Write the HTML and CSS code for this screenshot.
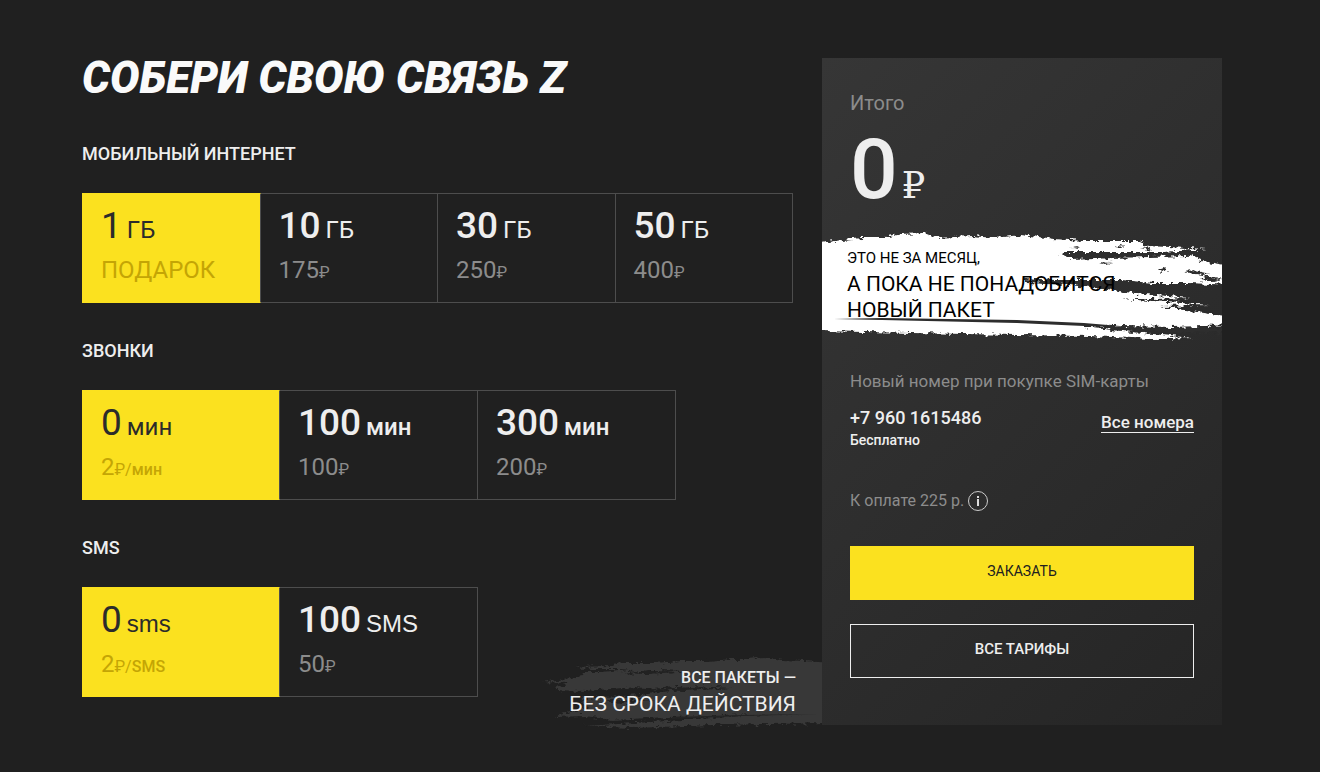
FILE: index.html
```html
<!DOCTYPE html>
<html lang="ru">
  <head>
    <meta charset="UTF-8" />
    <meta name="viewport" content="width=device-width, initial-scale=1.0" />
    <title>Собери свою связь Z</title>
    <link rel="stylesheet" href="styles.css">
  </head>
  <body>
    <main class="constructor">
      <form class="packages" id="packages">
        <h1>Собери свою связь Z</h1>

        <fieldset class="group">
          <legend>Мобильный интернет</legend>
          <div class="options options_wide">
            <label class="option">
              <input type="radio" name="internet" checked />
              <span class="amount">1<small>ГБ</small></span>
              <span class="price">ПОДАРОК</span>
            </label>
            <label class="option">
              <input type="radio" name="internet" />
              <span class="amount">10<small>ГБ</small></span>
              <span class="price">175<small>₽</small></span>
            </label>
            <label class="option">
              <input type="radio" name="internet" />
              <span class="amount">30<small>ГБ</small></span>
              <span class="price">250<small>₽</small></span>
            </label>
            <label class="option">
              <input type="radio" name="internet" />
              <span class="amount">50<small>ГБ</small></span>
              <span class="price">400<small>₽</small></span>
            </label>
          </div>
        </fieldset>

        <fieldset class="group">
          <legend>Звонки</legend>
          <div class="options">
            <label class="option">
              <input type="radio" name="calls" checked />
              <span class="amount">0<small>мин</small></span>
              <span class="price">2<small>₽/<b>мин</b></small></span>
            </label>
            <label class="option">
              <input type="radio" name="calls" />
              <span class="amount">100<small class="unit_bold">мин</small></span>
              <span class="price">100<small>₽</small></span>
            </label>
            <label class="option">
              <input type="radio" name="calls" />
              <span class="amount">300<small class="unit_bold">мин</small></span>
              <span class="price">200<small>₽</small></span>
            </label>
          </div>
        </fieldset>

        <fieldset class="group">
          <legend>SMS</legend>
          <div class="last_row">
            <div class="options">
              <label class="option">
                <input type="radio" name="sms" checked />
                <span class="amount">0<small class="sms">sms</small></span>
                <span class="price">2<small>₽/<b>SMS</b></small></span>
              </label>
              <label class="option">
                <input type="radio" name="sms" />
                <span class="amount">100<small class="sms">SMS</small></span>
                <span class="price">50<small>₽</small></span>
              </label>
            </div>
            <p class="note">
              <svg class="brush" viewBox="0 0 280 74" preserveAspectRatio="none" aria-hidden="true">
                <g fill="#383838" filter="url(#rough)">
                  <path d="M290 7 L262 5 L240 4 L222 1 L205 3 L190 3 L165 5 L140 5 L110 7 L80 7 L70 10 L34 11 L50 13 L88 13 L60 16 L40 16 L42 20 L22 23 L-3 26 L28 27 L10 34 L44 35 L95 31 L128 35 L100 39 L60 41 L38 44 L46 52 L30 55 L12 61 L42 60 L70 64 L125 61 L280 58 L290 58 Z" />
                  <path d="M290 57 L200 60 L110 66 L42 70 L90 72 L170 69 L290 67 Z" />
                </g>
                <g fill="#202020" filter="url(#rough)">
                  <path d="M78 17 L110 14 L150 15 L105 18 Z" />
                  <path d="M108 33 L150 30 L190 32 L142 35 Z" />
                  <path d="M55 45 L90 43 L115 44 L80 47 Z" />
                </g>
                <path d="M130 61 L200 59 L276 58 L200 60 L130 63 Z" fill="#242424" />
              </svg>
              <span class="line_small">Все пакеты —</span>
              <span class="line_big">Без срока действия</span>
            </p>
          </div>
        </fieldset>
      </form>

      <aside class="total">
        <h2>Итого</h2>
        <output class="sum" form="packages">0<small>₽</small></output>

        <p class="banner">
          <svg class="brush" viewBox="0 0 400 112" preserveAspectRatio="none" aria-hidden="true">
            <defs>
              <filter id="rough" x="-5%" y="-10%" width="110%" height="120%">
                <feTurbulence type="fractalNoise" baseFrequency="0.16 0.3" numOctaves="3" seed="8" />
                <feDisplacementMap in="SourceGraphic" scale="8" xChannelSelector="R" yChannelSelector="G" />
              </filter>
            </defs>
            <g fill="#fff" filter="url(#rough)">
              <!-- main stroke -->
              <path d="M-10 14 L12 11 L40 8 L62 8 L80 4 L102 3 L115 8 L150 6 L172 8 L200 5 L232 9 L262 11 L316 11 L326 16 L386 19 L340 22 L300 22 L238 24 L252 29 L290 27 L366 25 L380 31 L410 36 L410 55 L368 53 L330 53 L300 50 L232 50 L202 48 L204 53 L245 55 L280 58 L302 62 L368 68 L330 69 L300 69 L388 75 L338 76 L362 80 L410 87 L410 95 L350 97 L300 96 L262 96 L262 97 L300 101 L370 108 L330 109 L270 106 L195 105 L90 103 L-10 101 Z" />
            </g>
            <!-- gap above the lower stroke -->
            <path d="M12 89 L60 88 L195 90 L262 93 L310 97 L262 96 L195 93 L60 90 Z" fill="#2d2d2d" />
            <g fill="#2d2d2d" filter="url(#rough)">
              <path d="M250 17 L255 16 L256 18 Z M292 17 L298 15 L301 18 Z M336 39 L342 37 L345 40 L339 42 Z M362 42 L380 45 L388 44 L370 40 Z M378 49 L392 51 L400 49 L386 47 Z M276 32 L290 33 L282 34 Z M318 18 L325 17 L329 20 Z" />
              <path d="M238 22 L300 22 L340 23 L386 21 L366 26 L290 28 L252 30 Z" />
              <path d="M265 95 L340 98 L410 98 L410 102 L350 103 L300 99 Z" />
            </g>
          </svg>
          <span class="line_small">Это не за месяц,</span>
          <span class="line_big">А пока не понадобится<br />новый пакет</span>
        </p>

        <h3>Новый номер при покупке SIM-карты</h3>
        <div class="number">
          <p>
            <strong>+7 960 1615486</strong>
            <span>Бесплатно</span>
          </p>
          <a href="#">Все номера</a>
        </div>

        <div class="payment">
          <span>К оплате 225 р.</span>
          <button type="button" class="info" aria-label="Подробнее">
            <svg width="20" height="20" viewBox="0 0 20 20" aria-hidden="true">
              <circle cx="10" cy="10" r="9.5" fill="none" stroke="#ccc" />
              <path d="M9 5h2v2H9zM9 8h2v7H9z" fill="#ddd" />
            </svg>
          </button>
        </div>

        <button type="submit" form="packages" class="button button_yellow">Заказать</button>
        <button type="button" class="button">Все тарифы</button>
      </aside>
    </main>
  </body>
</html>
```
FILE: styles.css
```css
* {
  box-sizing: border-box;
}
body {
  margin: 0;
  padding: 58px 16px 40px 0;
  background-color: #202020;
  color: #eee;
  font-family: Roboto, "Liberation Sans", sans-serif;
}
h1,
h2,
h3,
p {
  margin: 0;
}
.constructor {
  display: flex;
  max-width: 1140px;
  margin: 0 auto;
}
.packages {
  flex: 1;
  min-width: 0;
}
h1 {
  color: #fafafa;
  font-size: 44px;
  line-height: 40px;
  font-weight: 900;
  font-style: italic;
  text-transform: uppercase;
  margin-bottom: 45px;
}
.group {
  border: none;
  margin: 0 0 37px;
  padding: 0;
  min-width: 0;
}
.group:last-child {
  margin-bottom: 28px;
}
legend {
  padding: 0;
  margin-bottom: 29px;
  font-size: 18px;
  line-height: 21px;
  font-weight: 500;
  text-transform: uppercase;
}

/* options */
.options {
  display: flex;
}
.option {
  width: 198px;
  height: 110px;
  padding: 11px 18px;
  border: 1px solid #4d4d4d;
  cursor: pointer;
}
.option + .option {
  border-left: none;
}
.options_wide {
  margin-right: 29px;
}
.options_wide .option {
  flex: 1;
}
.option input {
  position: absolute;
  opacity: 0;
}
.option:has(input:checked) {
  background-color: #fbe11f;
  border-color: #fbe11f #4d4d4d #fbe11f #fbe11f;
  color: #2b2b2b;
}
.option:has(input:focus-visible) {
  outline: 2px solid #fff;
}
.amount,
.price {
  display: flex;
  align-items: baseline;
  white-space: nowrap;
}
.amount {
  gap: 5px;
  font-size: 37px;
  line-height: 42px;
  font-weight: 500;
}
.amount small {
  font-size: 24px;
  line-height: 30px;
  font-weight: 400;
}
.amount .unit_bold {
  font-weight: 500;
}
.amount .sms {
  font-family: "Liberation Sans", Arial, sans-serif;
}
.option:has(input:checked) .amount {
  font-weight: 400;
}
.price {
  margin-top: 8px;
  color: #8c8c8c;
  font-size: 24px;
  line-height: 30px;
}
.price small {
  font-size: 16px;
}
.price b {
  font-weight: 500;
}
.option:has(input:checked) .price {
  color: #c4a505;
}

/* brush notes */
.last_row {
  display: flex;
  justify-content: space-between;
}
.note,
.banner {
  position: relative;
  text-transform: uppercase;
}
.note {
  align-self: flex-end;
  width: 280px;
  height: 74px;
  margin-bottom: -33px;
  padding: 9px 26px 0 0;
  text-align: right;
}
.brush {
  position: absolute;
  top: 0;
  left: 0;
  width: 100%;
  height: 100%;
}
.line_small,
.line_big {
  display: block;
  position: relative;
  white-space: nowrap;
}
.line_small {
  font-size: 15px;
  line-height: 26px;
}
.line_big {
  font-size: 21px;
  line-height: 26px;
}
.note .line_small {
  font-size: 16px;
  font-weight: 500;
}

/* total */
.total {
  width: 400px;
  padding: 33px 28px 47px;
  background: linear-gradient(135deg, #363636, #252525);
}
h2 {
  color: #8c8c8c;
  font-size: 20px;
  line-height: 24px;
  font-weight: 400;
}
.sum {
  display: flex;
  align-items: baseline;
  gap: 4px;
  height: 96px;
  margin-top: 7px;
  font-size: 84px;
  line-height: 96px;
  font-weight: 500;
}
.sum small {
  font-family: "Liberation Serif", "DejaVu Serif", serif;
  font-size: 37px;
  line-height: 40px;
  font-weight: 400;
}
.banner {
  height: 112px;
  margin: 12px -28px 0;
  padding: 15px 25px 0;
  overflow: hidden;
  color: #000;
}
h3 {
  margin-top: 29px;
  color: #8c8c8c;
  font-size: 17px;
  line-height: 20px;
  font-weight: 400;
}
.number {
  display: flex;
  justify-content: space-between;
  align-items: flex-start;
  margin-top: 15px;
}
.number strong,
.number span {
  display: block;
}
.number strong {
  font-size: 18px;
  line-height: 24px;
  font-weight: 500;
}
.number span {
  font-size: 14px;
  line-height: 20px;
  font-weight: 500;
}
.number a {
  margin-top: 6px;
  border-bottom: 1px solid #eee;
  color: #eee;
  font-size: 17px;
  line-height: 20px;
  font-weight: 500;
  text-decoration: none;
}
.payment {
  display: flex;
  align-items: center;
  gap: 4px;
  margin: 40px 0 34px;
  color: #8c8c8c;
  font-size: 16px;
  line-height: 22px;
}
.info {
  display: flex;
  padding: 0;
  border: none;
  background: none;
  cursor: pointer;
}
.button {
  display: block;
  width: 100%;
  height: 54px;
  padding: 0 0 4px;
  border: 1px solid #eee;
  background: none;
  color: #eee;
  font-family: inherit;
  font-size: 15px;
  font-weight: 500;
  text-transform: uppercase;
  cursor: pointer;
}
.button + .button {
  margin-top: 24px;
}
.button_yellow {
  border-color: #fbe11f;
  background-color: #fbe11f;
  color: #202020;
  font-size: 14px;
  font-weight: 400;
}

@media (max-width: 1100px) {
  .constructor {
    flex-wrap: wrap;
  }
  .packages {
    flex-basis: 100%;
    margin-bottom: 40px;
  }
}
```
